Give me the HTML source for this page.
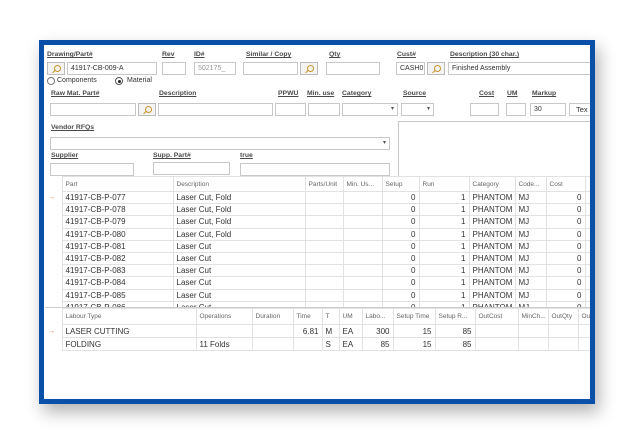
<!DOCTYPE html>
<html><head><meta charset="utf-8"><style>
*{margin:0;padding:0;box-sizing:border-box}
body{width:635px;height:445px;background:#fff;position:relative;overflow:hidden;font-family:"Liberation Sans",sans-serif;font-size:7px;color:#333}
.frame{position:absolute;left:39px;top:40px;width:556px;height:364px;border:5px solid #0a4fa8;background:#fff;box-shadow:4px 8px 16px rgba(0,0,0,.3)}
.a{position:absolute}
.l{position:absolute;font-size:6.8px;font-weight:bold;color:#4a4a4a;text-decoration:underline}
.i{position:absolute;border:1px solid #c8c8c8;background:#fff;height:13px;font-size:7px;line-height:11px;padding-left:3px;color:#333}
.s{position:absolute;border:1px solid #bbb;background:#f4f4f4;width:18px;height:13px}
.s:after{content:"";position:absolute;left:6px;top:2px;width:5px;height:5px;border:1px solid #c8962a;border-radius:50%}
.s:before{content:"";position:absolute;left:4px;top:8px;width:4px;height:1px;background:#c8962a;transform:rotate(-45deg)}
.dd:after{content:"▾";position:absolute;right:3px;top:0;font-size:6px;color:#555}
table{position:absolute;border-collapse:collapse;table-layout:fixed;font-size:8px}
td{border:1px solid #e2e2e2;height:12.2px;padding:0 3px;white-space:nowrap;overflow:hidden;color:#333}
tr.h td{height:15px;font-size:6.5px;color:#666;background:#fff}
td.r{text-align:right}
td.ind{color:#e8704a;border-left:none;border-top:none;border-bottom:none;font-size:7px}
.lo td{height:13px}
.lo tr.h td{height:16px}
</style></head><body>
<div class="frame"></div>
<div class="l" style="left:47px;top:51px">Drawing/Part#</div>
<div class="l" style="left:162px;top:51px">Rev</div>
<div class="l" style="left:194px;top:51px">ID#</div>
<div class="l" style="left:246px;top:51px">Similar / Copy</div>
<div class="l" style="left:329px;top:51px">Qty</div>
<div class="l" style="left:397px;top:51px">Cust#</div>
<div class="l" style="left:450px;top:51px">Description (30 char.)</div>
<div class="s" style="left:47px;top:62px"></div>
<div class="i" style="left:67px;top:62px;width:90px">41917-CB-009-A</div>
<div class="i" style="left:162px;top:62px;width:24px"></div>
<div class="i" style="left:194px;top:62px;width:42px;color:#999">502175_</div>
<div class="i" style="left:243px;top:62px;width:55px"></div>
<div class="s" style="left:300px;top:62px"></div>
<div class="i" style="left:326px;top:62px;width:54px"></div>
<div class="i" style="left:396px;top:62px;width:29px">CASH0</div>
<div class="s" style="left:427px;top:62px"></div>
<div class="i" style="left:448px;top:62px;width:142px;border-right:none">Finished Assembly</div>
<div class="a" style="left:47px;top:77px;width:8px;height:8px;border:1px solid #777;border-radius:50%"></div>
<div class="a" style="left:57px;top:77px;font-size:7px">Components</div>
<div class="a" style="left:115px;top:77px;width:8px;height:8px;border:1px solid #555;border-radius:50%"><div style="position:absolute;left:1.5px;top:1.5px;width:3px;height:3px;background:#222;border-radius:50%"></div></div>
<div class="a" style="left:127px;top:77px;font-size:7px">Material</div>
<div class="l" style="left:51px;top:90px">Raw Mat. Part#</div>
<div class="l" style="left:159px;top:90px">Description</div>
<div class="l" style="left:278px;top:90px">PPWU</div>
<div class="l" style="left:307px;top:90px">Min. use</div>
<div class="l" style="left:342px;top:90px">Category</div>
<div class="l" style="left:403px;top:90px">Source</div>
<div class="l" style="left:479px;top:90px">Cost</div>
<div class="l" style="left:507px;top:90px">UM</div>
<div class="l" style="left:532px;top:90px">Markup</div>
<div class="i" style="left:50px;top:103px;width:86px"></div>
<div class="s" style="left:138px;top:103px"></div>
<div class="i" style="left:158px;top:103px;width:115px"></div>
<div class="i" style="left:275px;top:103px;width:31px"></div>
<div class="i" style="left:308px;top:103px;width:32px"></div>
<div class="i dd" style="left:342px;top:103px;width:56px"></div>
<div class="i dd" style="left:401px;top:103px;width:33px"></div>
<div class="i" style="left:470px;top:103px;width:29px"></div>
<div class="i" style="left:506px;top:103px;width:20px"></div>
<div class="i" style="left:530px;top:103px;width:36px">30</div>
<div class="i" style="left:569px;top:103px;width:21px;border-right:none;font-size:7.5px;padding-left:6px">Tex</div>
<div class="l" style="left:51px;top:124px">Vendor RFQs</div>
<div class="i dd" style="left:50px;top:137px;width:340px"></div>
<div class="i" style="left:398px;top:121px;width:192px;height:56px;border-right:none"></div>
<div class="l" style="left:51px;top:152px">Supplier</div>
<div class="l" style="left:153px;top:152px">Supp. Part#</div>
<div class="l" style="left:240px;top:152px">true</div>
<div class="i" style="left:50px;top:163px;width:84px"></div>
<div class="i" style="left:153px;top:162px;width:77px"></div>
<div class="i" style="left:240px;top:163px;width:150px"></div>

<div class="a" style="left:45px;top:176px;width:545px;height:132px;overflow:hidden">
<table style="left:0;top:0;width:570px">
<colgroup><col style="width:17px"><col style="width:111px"><col style="width:132px"><col style="width:38px"><col style="width:39px"><col style="width:37px"><col style="width:50px"><col style="width:46px"><col style="width:31px"><col style="width:39px"><col style="width:30px"></colgroup>
<tr class="h"><td class="ind"></td><td>Part</td><td>Description</td><td>Parts/Unit</td><td>Min. Us...</td><td>Setup</td><td>Run</td><td>Category</td><td>Code...</td><td>Cost</td><td></td></tr>
<tr><td class="ind">→</td><td>41917-CB-P-077</td><td>Laser Cut, Fold</td><td></td><td></td><td class="r">0</td><td class="r">1</td><td>PHANTOM</td><td>MJ</td><td class="r">0</td><td></td></tr>
<tr><td class="ind"></td><td>41917-CB-P-078</td><td>Laser Cut, Fold</td><td></td><td></td><td class="r">0</td><td class="r">1</td><td>PHANTOM</td><td>MJ</td><td class="r">0</td><td></td></tr>
<tr><td class="ind"></td><td>41917-CB-P-079</td><td>Laser Cut, Fold</td><td></td><td></td><td class="r">0</td><td class="r">1</td><td>PHANTOM</td><td>MJ</td><td class="r">0</td><td></td></tr>
<tr><td class="ind"></td><td>41917-CB-P-080</td><td>Laser Cut, Fold</td><td></td><td></td><td class="r">0</td><td class="r">1</td><td>PHANTOM</td><td>MJ</td><td class="r">0</td><td></td></tr>
<tr><td class="ind"></td><td>41917-CB-P-081</td><td>Laser Cut</td><td></td><td></td><td class="r">0</td><td class="r">1</td><td>PHANTOM</td><td>MJ</td><td class="r">0</td><td></td></tr>
<tr><td class="ind"></td><td>41917-CB-P-082</td><td>Laser Cut</td><td></td><td></td><td class="r">0</td><td class="r">1</td><td>PHANTOM</td><td>MJ</td><td class="r">0</td><td></td></tr>
<tr><td class="ind"></td><td>41917-CB-P-083</td><td>Laser Cut</td><td></td><td></td><td class="r">0</td><td class="r">1</td><td>PHANTOM</td><td>MJ</td><td class="r">0</td><td></td></tr>
<tr><td class="ind"></td><td>41917-CB-P-084</td><td>Laser Cut</td><td></td><td></td><td class="r">0</td><td class="r">1</td><td>PHANTOM</td><td>MJ</td><td class="r">0</td><td></td></tr>
<tr><td class="ind"></td><td>41917-CB-P-085</td><td>Laser Cut</td><td></td><td></td><td class="r">0</td><td class="r">1</td><td>PHANTOM</td><td>MJ</td><td class="r">0</td><td></td></tr>
<tr><td class="ind"></td><td>41917-CB-P-086</td><td>Laser Cut</td><td></td><td></td><td class="r">0</td><td class="r">1</td><td>PHANTOM</td><td>MJ</td><td class="r">0</td><td></td></tr>
</table></div>
<div class="a" style="left:45px;top:307px;width:545px;height:1px;background:#ccc"></div>
<div class="a lo" style="left:45px;top:308px;width:545px;height:48px;overflow:hidden">
<table style="left:0;top:0;width:560px">
<colgroup><col style="width:17px"><col style="width:134px"><col style="width:56px"><col style="width:41px"><col style="width:29px"><col style="width:17px"><col style="width:23px"><col style="width:31px"><col style="width:42px"><col style="width:40px"><col style="width:43px"><col style="width:30px"><col style="width:30px"><col style="width:27px"></colgroup>
<tr class="h"><td class="ind"></td><td>Labour Type</td><td>Operations</td><td>Duration</td><td>Time</td><td>T</td><td>UM</td><td>Labo...</td><td>Setup Time</td><td>Setup R...</td><td>OutCost</td><td>MinCh...</td><td>OutQty</td><td>Ou</td></tr>
<tr><td class="ind">→</td><td>LASER CUTTING</td><td></td><td></td><td class="r">6.81</td><td>M</td><td>EA</td><td class="r">300</td><td class="r">15</td><td class="r">85</td><td></td><td></td><td></td><td></td></tr>
<tr><td class="ind"></td><td>FOLDING</td><td>11 Folds</td><td></td><td></td><td>S</td><td>EA</td><td class="r">85</td><td class="r">15</td><td class="r">85</td><td></td><td></td><td></td><td></td></tr>
</table></div>
</body></html>
